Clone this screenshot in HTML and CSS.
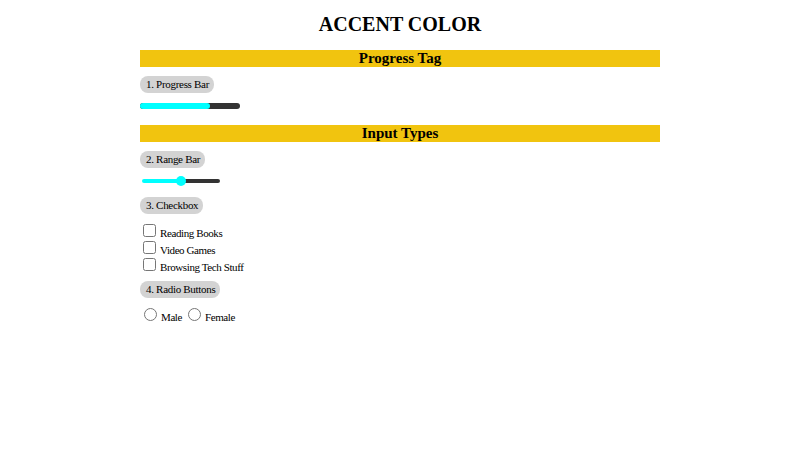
FILE: index.html
```html
<!DOCTYPE html>
<html lang="en">

<head>
    <meta charset="UTF-8">
    <meta name="viewport" content="width=device-width, initial-scale=1.0">
    <title>Accent Color</title>
    <link rel="stylesheet" href="styles.css">
</head>

<body>
    <h1>ACCENT COLOR</h1>
    <section class="container">
        <h2 class="section-title">Progress Tag</h2>
        <p class="tag">1. Progress Bar</p>
        <progress value="70" max="100"></progress>

        <h2 class="section-title">Input Types</h2>
        <p class="tag">2. Range Bar</p>
        <input type="range" min="0" max="100" value="50">

        <p class="tag">3. Checkbox</p>
        <div class="options">
            <label class="option"><input type="checkbox" name="hobby"><span>Reading Books</span></label>
            <label class="option"><input type="checkbox" name="hobby"><span>Video Games</span></label>
            <label class="option"><input type="checkbox" name="hobby"><span>Browsing Tech Stuff</span></label>
        </div>

        <p class="tag">4. Radio Buttons</p>
        <div class="radios">
            <label class="option"><input type="radio" name="gender"><span>Male</span></label>
            <label class="option"><input type="radio" name="gender"><span>Female</span></label>
        </div>
    </section>
</body>

</html>
```

FILE: styles.css
```css
body {
    font-family: "Liberation Serif", "Times New Roman", serif;
    font-size: 11px;
    color: #000;
    margin: 0;
}

h1 {
    font-size: 20px;
    line-height: 23px;
    text-align: center;
    margin: 13px 0 14px;
}

.container {
    width: 520px;
    margin: 0 auto;
    accent-color: cyan;
}

.section-title {
    background: #f1c40f;
    font-size: 15px;
    line-height: 17px;
    text-align: center;
    margin: 0 0 9px;
}

.tag {
    display: inline-block;
    background: #d3d3d3;
    border-radius: 8px;
    padding: 2px 5px 2px 6px;
    line-height: 13px;
    letter-spacing: -0.3px;
    margin: 0 0 9px;
}

/* Progress bar */
progress {
    display: block;
    appearance: none;
    -webkit-appearance: none;
    width: 100px;
    height: 6px;
    border: none;
    margin: 1px 0 16px;
}

progress::-webkit-progress-bar {
    background: #333;
    border-radius: 3px;
}

progress::-webkit-progress-value {
    background: cyan;
    border-radius: 3px;
}

/* Range slider */
input[type="range"] {
    display: block;
    appearance: none;
    -webkit-appearance: none;
    width: 78px;
    height: 10px;
    background: transparent;
    margin: -1px 0 11px 2px;
}

input[type="range"]::-webkit-slider-runnable-track {
    height: 4px;
    border-radius: 2px;
    background: linear-gradient(to right, cyan 50%, #333 50%);
}

input[type="range"]::-webkit-slider-thumb {
    -webkit-appearance: none;
    width: 10px;
    height: 10px;
    border-radius: 50%;
    background: cyan;
    margin-top: -3px;
}

/* Checkbox and radio rows */
.options {
    margin-bottom: 7px;
}

.option {
    display: flex;
    align-items: flex-start;
    height: 17px;
}

.option input {
    margin: 1px 4px 0 3px;
}

.option span {
    line-height: 13px;
    padding-top: 4px;
    letter-spacing: -0.4px;
}

.radios {
    display: flex;
    gap: 2px;
}

.radios .option input {
    margin-left: 4px;
}
```
